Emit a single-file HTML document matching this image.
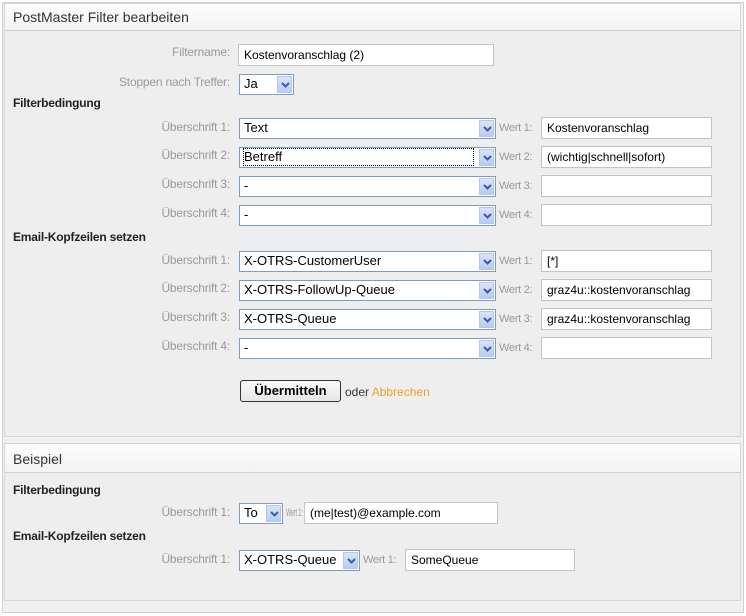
<!DOCTYPE html>
<html><head><meta charset="utf-8"><style>
*{box-sizing:border-box;margin:0;padding:0}
body{width:746px;height:616px;background:#fff;font-family:"Liberation Sans",Arial,sans-serif;font-size:12px;position:relative;overflow:hidden}
.a{position:absolute}
.lbl{position:absolute;color:#999;text-align:right;width:200px;font-size:12px;line-height:14px;letter-spacing:-0.2px}
.h{position:absolute;font-weight:bold;color:#222;font-size:12px;letter-spacing:-0.2px}
.inp{position:absolute;background:#fff;border:1px solid #c4c4c4;height:22px;padding:3px 5px;font-size:12px;line-height:14px;color:#000}
.sel{position:absolute;background:#fff;border:1px solid #7f9db9;height:21px;font-size:13px;line-height:18px;padding-left:4px;color:#000}
.sel .ar{position:absolute;right:1px;top:1px;width:15px;height:17px;background:linear-gradient(#d8e4fb,#b7cbf4);border:1px solid #b4c6ef}
.sel .ar svg{position:absolute;left:3px;top:5px}
.w{position:absolute;color:#999;font-size:11px;letter-spacing:-0.3px;white-space:nowrap;z-index:2}
.sel.foc span{outline:1px dotted #000;display:inline-block;width:calc(100% - 22px);line-height:16px;margin-top:1px}
</style></head><body>
<div class="a" style="left:2px;top:2px;width:742px;height:611px;border:1px solid #d0d0d0;background:#f0f0f0"></div>
<div class="a" style="left:4px;top:3px;width:737px;height:434px;background:#eeeeee;border:1px solid #d6d6d6"></div>
<div class="a" style="left:5px;top:4px;width:735px;height:27px;background:linear-gradient(#fcfcfc,#f3f3f3);border-bottom:1px solid #cfcfcf"></div>
<div class="a" style="left:13px;top:9px;font-size:14px;color:#333">PostMaster Filter bearbeiten</div>

<div class="lbl" style="left:30px;top:45px">Filtername:</div>
<div class="inp" style="left:238px;top:44px;width:256px">Kostenvoranschlag (2)</div>
<div class="lbl" style="left:30px;top:75px">Stoppen nach Treffer:</div>
<div class="sel" style="left:239px;top:74px;width:55px">Ja<div class="ar"><svg width="9" height="6"><path d="M1 1L4.5 4.5L8 1" stroke="#3a5aa0" stroke-width="2" fill="none"/></svg></div></div>

<div class="h" style="left:13px;top:96px">Filterbedingung</div>
<div class="lbl" style="left:30px;top:120px">Überschrift 1:</div>
<div class="sel" style="left:239px;top:118px;width:257px">Text<div class="ar"><svg width="9" height="6"><path d="M1 1L4.5 4.5L8 1" stroke="#3a5aa0" stroke-width="2" fill="none"/></svg></div></div>
<div class="w" style="left:499px;top:122px">Wert 1:</div>
<div class="inp" style="left:541px;top:117px;width:171px">Kostenvoranschlag</div>

<div class="lbl" style="left:30px;top:148px">Überschrift 2:</div>
<div class="sel foc" style="left:239px;top:147px;width:257px"><span>Betreff</span><div class="ar"><svg width="9" height="6"><path d="M1 1L4.5 4.5L8 1" stroke="#3a5aa0" stroke-width="2" fill="none"/></svg></div></div>
<div class="w" style="left:499px;top:151px">Wert 2:</div>
<div class="inp" style="left:541px;top:146px;width:171px">(wichtig|schnell|sofort)</div>

<div class="lbl" style="left:30px;top:177px">Überschrift 3:</div>
<div class="sel" style="left:239px;top:176px;width:257px">-<div class="ar"><svg width="9" height="6"><path d="M1 1L4.5 4.5L8 1" stroke="#3a5aa0" stroke-width="2" fill="none"/></svg></div></div>
<div class="w" style="left:499px;top:180px">Wert 3:</div>
<div class="inp" style="left:541px;top:175px;width:171px"></div>

<div class="lbl" style="left:30px;top:206px">Überschrift 4:</div>
<div class="sel" style="left:239px;top:205px;width:257px">-<div class="ar"><svg width="9" height="6"><path d="M1 1L4.5 4.5L8 1" stroke="#3a5aa0" stroke-width="2" fill="none"/></svg></div></div>
<div class="w" style="left:499px;top:209px">Wert 4:</div>
<div class="inp" style="left:541px;top:204px;width:171px"></div>

<div class="h" style="left:13px;top:230px">Email-Kopfzeilen setzen</div>
<div class="lbl" style="left:30px;top:253px">Überschrift 1:</div>
<div class="sel" style="left:239px;top:251px;width:257px">X-OTRS-CustomerUser<div class="ar"><svg width="9" height="6"><path d="M1 1L4.5 4.5L8 1" stroke="#3a5aa0" stroke-width="2" fill="none"/></svg></div></div>
<div class="w" style="left:499px;top:255px">Wert 1:</div>
<div class="inp" style="left:541px;top:250px;width:171px">[*]</div>

<div class="lbl" style="left:30px;top:281px">Überschrift 2:</div>
<div class="sel" style="left:239px;top:280px;width:257px">X-OTRS-FollowUp-Queue<div class="ar"><svg width="9" height="6"><path d="M1 1L4.5 4.5L8 1" stroke="#3a5aa0" stroke-width="2" fill="none"/></svg></div></div>
<div class="w" style="left:499px;top:284px">Wert 2:</div>
<div class="inp" style="left:541px;top:279px;width:171px">graz4u::kostenvoranschlag</div>

<div class="lbl" style="left:30px;top:310px">Überschrift 3:</div>
<div class="sel" style="left:239px;top:309px;width:257px">X-OTRS-Queue<div class="ar"><svg width="9" height="6"><path d="M1 1L4.5 4.5L8 1" stroke="#3a5aa0" stroke-width="2" fill="none"/></svg></div></div>
<div class="w" style="left:499px;top:313px">Wert 3:</div>
<div class="inp" style="left:541px;top:308px;width:171px">graz4u::kostenvoranschlag</div>

<div class="lbl" style="left:30px;top:339px">Überschrift 4:</div>
<div class="sel" style="left:239px;top:338px;width:257px">-<div class="ar"><svg width="9" height="6"><path d="M1 1L4.5 4.5L8 1" stroke="#3a5aa0" stroke-width="2" fill="none"/></svg></div></div>
<div class="w" style="left:499px;top:342px">Wert 4:</div>
<div class="inp" style="left:541px;top:337px;width:171px"></div>

<div class="a" style="left:240px;top:380px;width:101px;height:22px;border:1px solid #333;border-radius:3px;background:linear-gradient(#fafafa,#e6e6e6);font-weight:bold;font-size:13px;text-align:center;line-height:20px">Übermitteln</div>
<div class="a" style="left:345px;top:385px;color:#333">oder <span style="color:#f0a030">Abbrechen</span></div>

<div class="a" style="left:4px;top:443px;width:737px;height:158px;background:#eeeeee;border:1px solid #d6d6d6"></div>
<div class="a" style="left:5px;top:444px;width:735px;height:29px;background:linear-gradient(#fcfcfc,#f3f3f3);border-bottom:1px solid #cfcfcf"></div>
<div class="a" style="left:13px;top:451px;font-size:14px;color:#333">Beispiel</div>

<div class="h" style="left:13px;top:483px">Filterbedingung</div>
<div class="lbl" style="left:30px;top:505px">Überschrift 1:</div>
<div class="sel" style="left:239px;top:503px;width:44px">To<div class="ar"><svg width="9" height="6"><path d="M1 1L4.5 4.5L8 1" stroke="#3a5aa0" stroke-width="2" fill="none"/></svg></div></div>
<div class="w" style="left:286px;top:507px;transform:scaleX(0.5);transform-origin:0 0">Wert 1:</div>
<div class="inp" style="left:304px;top:502px;width:194px">(me|test)@example.com</div>

<div class="h" style="left:13px;top:529px">Email-Kopfzeilen setzen</div>
<div class="lbl" style="left:30px;top:552px">Überschrift 1:</div>
<div class="sel" style="left:239px;top:550px;width:121px">X-OTRS-Queue<div class="ar"><svg width="9" height="6"><path d="M1 1L4.5 4.5L8 1" stroke="#3a5aa0" stroke-width="2" fill="none"/></svg></div></div>
<div class="w" style="left:363px;top:554px">Wert 1:</div>
<div class="inp" style="left:405px;top:549px;width:170px">SomeQueue</div>
</body></html>
